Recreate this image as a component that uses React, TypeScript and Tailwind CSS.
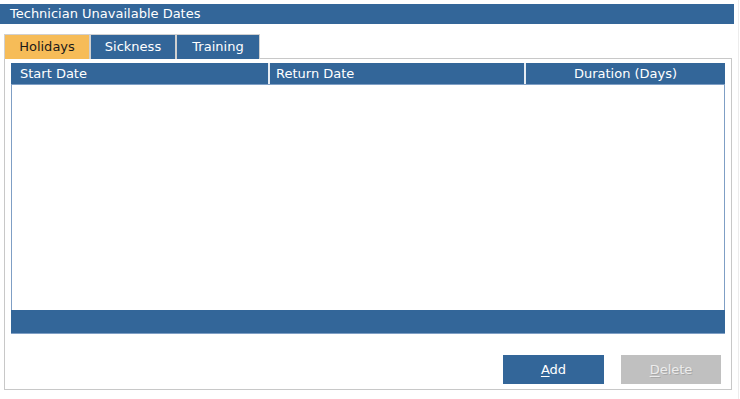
const tabs = ['Holidays', 'Sickness', 'Training']

function Tab({ label, active, last }: { label: string; active?: boolean; last?: boolean }) {
  return (
    <div
      className={
        'h-[25px] border border-b-0 border-[#d0d0d0] flex items-center justify-center text-[13px] ' +
        (last ? 'w-[84px] ' : 'w-[86px] ') +
        (active ? 'bg-[#f6bc58] text-[#1a1a1a]' : 'bg-[#336699] text-white')
      }
    >
      {label}
    </div>
  )
}

export default function App() {
  return (
    <div className="w-[740px] h-[399px] bg-white flex font-['DejaVu_Sans',Tahoma,sans-serif]">
      <div className="w-[738px] pt-[4px]">
        <div className="h-[20px] w-[734px] bg-[#336699] text-white text-[13px] leading-[20px] pl-[10px]">
          Technician Unavailable Dates
        </div>

        <div className="mt-[10px] ml-[4px] flex">
          {tabs.map((t, i) => (
            <Tab key={t} label={t} active={i === 0} last={i === tabs.length - 1} />
          ))}
        </div>

        <div className="ml-[4px] w-[728px] h-[332px] border border-[#c8c8c8] -mt-px pt-[4px] px-[6px] pb-[5px] flex flex-col">
          <div className="flex flex-col">
            <div className="h-[21px] bg-[#336699] text-white text-[13px] flex leading-[21px]">
              <div className="w-[257px] pl-[9px]">Start Date</div>
              <div className="w-[256px] pl-[6px] border-l-2 border-[#e6ecf3]">Return Date</div>
              <div className="flex-1 text-center border-l-2 border-[#e6ecf3]">Duration (Days)</div>
            </div>
            <div className="h-[226px] bg-white border border-b-0 border-[#7f9fc5]" />
            <div className="h-[24px] bg-[#336699] border-b border-[#7f9fc5]" />
          </div>

          <div className="mt-auto flex justify-end gap-[17px] pr-[4px]">
            <button
              type="button"
              className="w-[101px] h-[29px] bg-[#336699] text-white text-[13px]"
            >
              <span className="underline underline-offset-2">A</span>dd
            </button>
            <button
              type="button"
              disabled
              className="w-[100px] h-[29px] bg-[#c0c0c0] text-[#ececec] text-[13px] [text-shadow:1px_1px_0_#a8a8a8]"
            >
              <span className="underline underline-offset-2">D</span>elete
            </button>
          </div>
        </div>
      </div>
      <div className="w-px h-full bg-[#ececec]" />
    </div>
  )
}
